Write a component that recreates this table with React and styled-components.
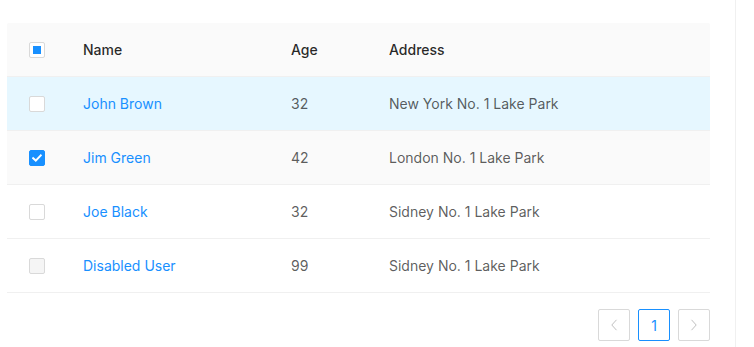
import React from 'react';
import styled, { createGlobalStyle } from 'styled-components';

const GlobalStyle = createGlobalStyle`
  html, body {
    margin: 0;
    padding: 0;
    background: #ffffff;
    font-family: Inter, "Noto Sans", "Liberation Sans", sans-serif;
    font-size: 14px;
    color: rgba(0, 0, 0, 0.65);
  }
`;

const data = [
  { key: 1, name: 'John Brown', age: 32, address: 'New York No. 1 Lake Park', selected: true },
  { key: 2, name: 'Jim Green', age: 42, address: 'London No. 1 Lake Park', checked: true, hover: true },
  { key: 3, name: 'Joe Black', age: 32, address: 'Sidney No. 1 Lake Park' },
  { key: 4, name: 'Disabled User', age: 99, address: 'Sidney No. 1 Lake Park', disabled: true },
];

const Checkbox = ({ state }) => (
  <Box state={state}>
    {state === 'checked' && (
      <svg width="10" height="8" viewBox="0 0 10 8">
        <path d="M1.2 4.2 L3.8 6.6 L8.8 1.4" fill="none" stroke="#fff" strokeWidth="2" strokeLinecap="square" />
      </svg>
    )}
    {state === 'indeterminate' && <Dot />}
  </Box>
);

const Chevron = ({ dir }) => (
  <svg width="8" height="12" viewBox="0 0 8 12">
    <path
      d={dir === 'left' ? 'M6.5 0.8 L1.8 6 L6.5 11.2' : 'M1.5 0.8 L6.2 6 L1.5 11.2'}
      fill="none"
      stroke="rgba(0,0,0,0.25)"
      strokeWidth="1"
    />
  </svg>
);

const App = () => {
  return (
    <>
      <GlobalStyle />
      <Page>
        <Main>
          <Table>
            <HeadRow>
              <SelCell>
                <Checkbox state="indeterminate" />
              </SelCell>
              <HeadCell>Name</HeadCell>
              <HeadCell>Age</HeadCell>
              <HeadCell>Address</HeadCell>
            </HeadRow>
            {data.map((row) => (
              <Row key={row.key} selected={row.selected} hover={row.hover}>
                <SelCell>
                  <Checkbox state={row.checked ? 'checked' : row.disabled ? 'disabled' : 'empty'} />
                </SelCell>
                <Cell>
                  <NameLink>{row.name}</NameLink>
                </Cell>
                <Cell>{row.age}</Cell>
                <Cell>{row.address}</Cell>
              </Row>
            ))}
          </Table>
          <Pagination>
            <PageButton disabled>
              <Chevron dir="left" />
            </PageButton>
            <PageButton active>1</PageButton>
            <PageButton disabled>
              <Chevron dir="right" />
            </PageButton>
          </Pagination>
        </Main>
      </Page>
    </>
  );
};

export default App;

const Page = styled.div`
  display: flex;
  height: 347px;
  overflow: hidden;
`;

const Main = styled.div`
  width: 736px;
  padding: 23px 25px 0 7px;
  box-sizing: border-box;
  border-right: 1px solid #f0f0f0;
`;

const Table = styled.div`
  display: grid;
  grid-template-columns: 60px 208px 98px 1fr;
  border-radius: 2px 2px 0 0;
  overflow: hidden;
`;

const HeadRow = styled.div`
  display: contents;

  & > div {
    height: 53px;
    background: #fafafa;
    border-bottom: 1px solid #f0f0f0;
  }
`;

const Row = styled.div`
  display: contents;

  & > div {
    height: 53px;
    border-bottom: 1px solid #f0f0f0;
    background: ${(p) => (p.selected ? '#e6f7ff' : p.hover ? '#fafafa' : '#ffffff')};
  }
`;

const SelCell = styled.div`
  display: flex;
  align-items: center;
  justify-content: center;
`;

const HeadCell = styled.div`
  display: flex;
  align-items: center;
  padding: 0 16px;
  font-weight: 500;
  color: rgba(0, 0, 0, 0.85);
`;

const Cell = styled.div`
  display: flex;
  align-items: center;
  padding: 0 16px;
  color: rgba(0, 0, 0, 0.65);
`;

const NameLink = styled.a`
  color: #1890ff;
  cursor: pointer;
`;

const Box = styled.span`
  width: 16px;
  height: 16px;
  box-sizing: border-box;
  border-radius: 2px;
  display: flex;
  align-items: center;
  justify-content: center;
  border: 1px solid ${(p) => (p.state === 'checked' ? '#1890ff' : '#d9d9d9')};
  background: ${(p) =>
    p.state === 'checked' ? '#1890ff' : p.state === 'disabled' ? '#f5f5f5' : '#ffffff'};
`;

const Dot = styled.span`
  width: 8px;
  height: 8px;
  background: #1890ff;
`;

const Pagination = styled.div`
  display: flex;
  justify-content: flex-end;
  gap: 8px;
  margin-top: 16px;
`;

const PageButton = styled.div`
  width: 32px;
  height: 32px;
  box-sizing: border-box;
  display: flex;
  align-items: center;
  justify-content: center;
  border: 1px solid ${(p) => (p.active ? '#1890ff' : '#d9d9d9')};
  border-radius: 2px;
  color: ${(p) => (p.active ? '#1890ff' : 'rgba(0,0,0,0.25)')};
  font-size: 14px;
  background: #fff;
`;
